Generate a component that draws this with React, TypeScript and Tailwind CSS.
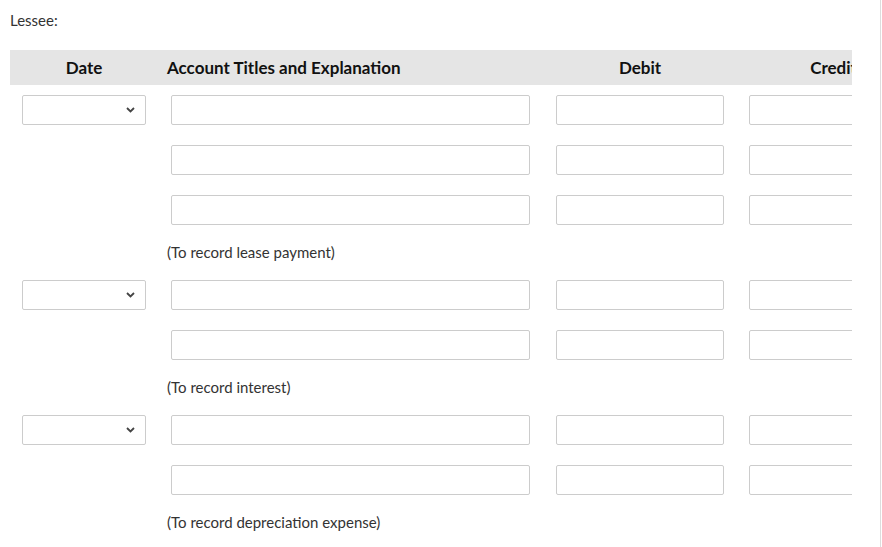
const FONT = "font-['Lato','Liberation_Sans',sans-serif]";

type Group = { lines: number; note: string };

const groups: Group[] = [
  { lines: 3, note: "(To record lease payment)" },
  { lines: 2, note: "(To record interest)" },
  { lines: 2, note: "(To record depreciation expense)" },
];

function DateSelect() {
  return (
    <div className="relative h-[30px] w-[124px] rounded-[2px] border border-[#cccccc] bg-white">
      <svg className="absolute right-[10px] top-[11px]" width="9" height="6" viewBox="0 0 9 6">
        <path d="M1 1l3.5 3.5L8 1" fill="none" stroke="#444" strokeWidth="1.8" />
      </svg>
    </div>
  );
}

function Box({ w }: { w: string }) {
  return <div className={`h-[30px] ${w} shrink-0 rounded-[2px] border border-[#cccccc] bg-white`} />;
}

function Row({ first }: { first: boolean }) {
  return (
    <div className="flex h-[50px] items-center">
      <div className="flex w-[148px] shrink-0 justify-center">{first && <DateSelect />}</div>
      <div className="w-[385px] shrink-0 pl-[13px]">
        <Box w="w-[359px]" />
      </div>
      <div className="w-[194px] shrink-0 pl-[13px]">
        <Box w="w-[168px]" />
      </div>
      <div className="w-[193px] shrink-0 pl-[12px]">
        <Box w="w-[168px]" />
      </div>
    </div>
  );
}

export default function App() {
  return (
    <div className={`${FONT} min-h-screen w-[881px] border-r border-[#dddddd] bg-white text-[15px]`}>
      <div className="px-[10px] pt-[10px] leading-[20px] text-[#333333]">Lessee:</div>

      <div className="ml-[10px] mt-[20px] w-[842px] overflow-hidden">
        <div className="w-[920px]">
          <div className="flex h-[35px] items-center bg-[#e5e5e5] text-[17px] font-bold text-[#111111]">
            <div className="w-[148px] shrink-0 text-center">Date</div>
            <div className="w-[385px] shrink-0 pl-[9px]">Account Titles and Explanation</div>
            <div className="w-[194px] shrink-0 text-center">Debit</div>
            <div className="w-[193px] shrink-0 text-center">Credit</div>
          </div>

          {groups.map((g, gi) => (
            <div key={gi}>
              {Array.from({ length: g.lines }).map((_, i) => (
                <Row key={i} first={i === 0} />
              ))}
              <div className="flex h-[35px] items-center">
                <div className="w-[148px] shrink-0" />
                <div className="pl-[9px] text-[#333333]">{g.note}</div>
              </div>
            </div>
          ))}
        </div>
      </div>
    </div>
  );
}
